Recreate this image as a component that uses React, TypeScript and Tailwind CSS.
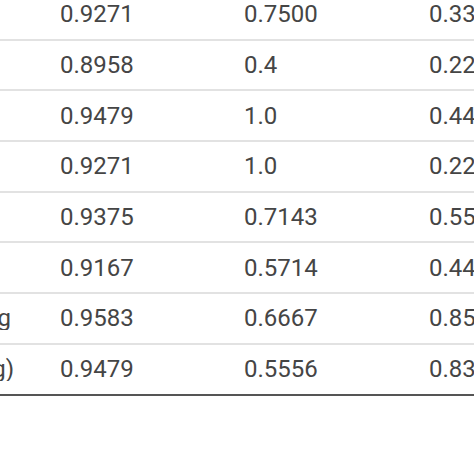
import React from "react";

const rows: { label: string; pr: string; a: string; b: string; c: string }[] = [
  { label: "", pr: "pr-[49px]", a: "0.9271", b: "0.7500", c: "0.3333" },
  { label: "", pr: "pr-[49px]", a: "0.8958", b: "0.4", c: "0.2222" },
  { label: "", pr: "pr-[49px]", a: "0.9479", b: "1.0", c: "0.4444" },
  { label: "", pr: "pr-[49px]", a: "0.9271", b: "1.0", c: "0.2222" },
  { label: "", pr: "pr-[49px]", a: "0.9375", b: "0.7143", c: "0.5556" },
  { label: "", pr: "pr-[49px]", a: "0.9167", b: "0.5714", c: "0.4444" },
  { label: "Weighted Voting", pr: "pr-[49px]", a: "0.9583", b: "0.6667", c: "0.8571" },
  { label: "Ensemble (Voting)", pr: "pr-[46px]", a: "0.9479", b: "0.5556", c: "0.8333" },
];

export default function App() {
  return (
    <div className="w-[474px] h-[474px] overflow-hidden bg-white text-[#454545] text-[24px] leading-none" style={{ fontFamily: "Roboto, 'Liberation Sans', sans-serif" }}>
      <div className="mt-[-10px] flex flex-col">
        {rows.map((r, i) => (
          <div
            key={i}
            className={
              i === rows.length - 1
                ? "flex items-center h-[50.7px] border-b-2 border-[#555555]"
                : "flex items-center h-[50.7px] border-b-2 border-[#e2e2e2]"
            }
          >
            <div className={"w-[60px] shrink-0 overflow-hidden whitespace-nowrap flex justify-end " + r.pr}>
              <span>{r.label}</span>
            </div>
            <div className="w-[184px] shrink-0">{r.a}</div>
            <div className="w-[185px] shrink-0">{r.b}</div>
            <div className="shrink-0 whitespace-nowrap">{r.c}</div>
          </div>
        ))}
      </div>
    </div>
  );
}
